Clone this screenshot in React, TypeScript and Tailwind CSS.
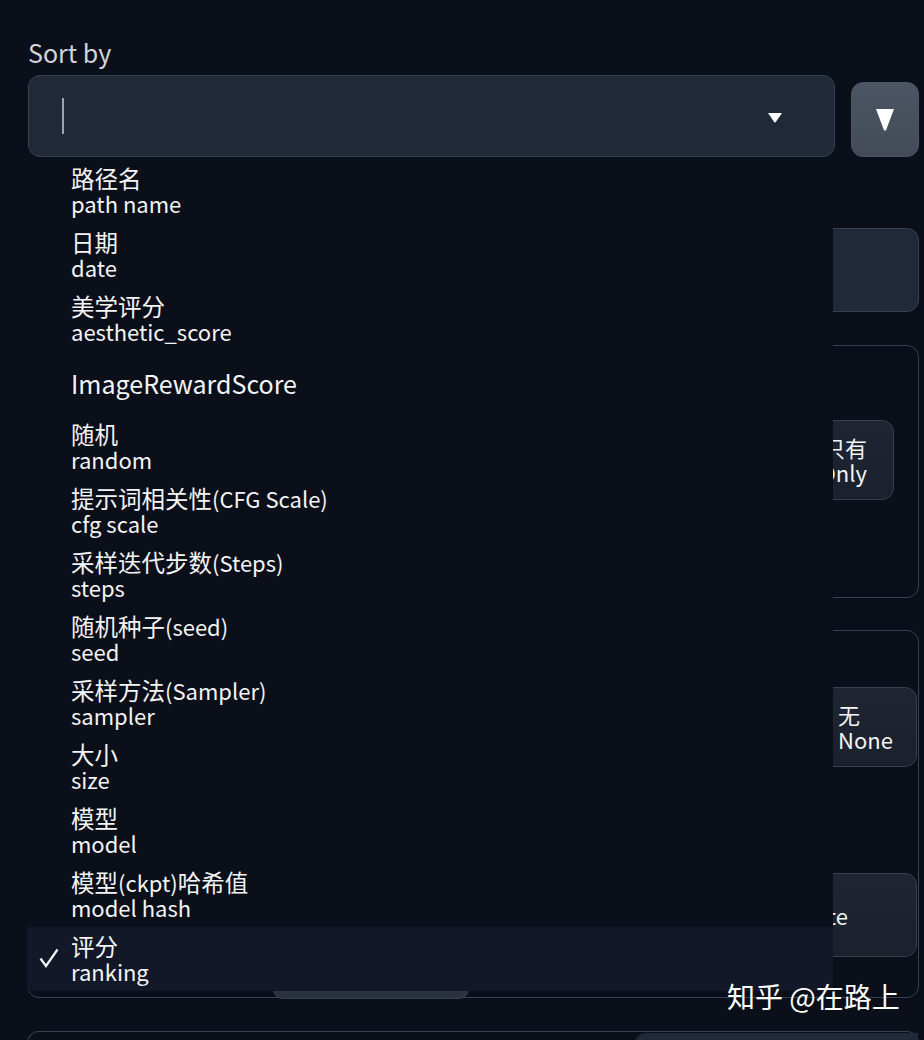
const OPTIONS: { zh?: string; en: string }[] = [
  { zh: '路径名', en: 'path name' },
  { zh: '日期', en: 'date' },
  { zh: '美学评分', en: 'aesthetic_score' },
  { en: 'ImageRewardScore' },
  { zh: '随机', en: 'random' },
  { zh: '提示词相关性(CFG Scale)', en: 'cfg scale' },
  { zh: '采样迭代步数(Steps)', en: 'steps' },
  { zh: '随机种子(seed)', en: 'seed' },
  { zh: '采样方法(Sampler)', en: 'sampler' },
  { zh: '大小', en: 'size' },
  { zh: '模型', en: 'model' },
  { zh: '模型(ckpt)哈希值', en: 'model hash' },
  { zh: '评分', en: 'ranking' },
];

const SELECTED = 'ranking';

// han glyphs come out a bit wider than the latin ones in the original
function Mixed({ text }: { text: string }) {
  return (
    <>
      {text.split(/([\u4e00-\u9fff]+)/).map((part, i) =>
        /[\u4e00-\u9fff]/.test(part) ? (
          <span key={i} className="text-[23.5px]">{part}</span>
        ) : (
          part
        )
      )}
    </>
  );
}

function SortDropdown() {
  return (
    <div className="absolute left-0 top-[123px] z-20 w-[806px] bg-[#0b0f19]">
      {OPTIONS.map((opt) => {
        const active = opt.en === SELECTED;
        return (
          <div
            key={opt.en}
            className={`relative flex h-16 flex-col justify-center pl-[44px] text-[#f3f4f6] ${active ? 'bg-[#121827]' : ''}`}
          >
            {active && (
              <svg viewBox="0 0 20 20" className="absolute left-[12px] top-[21px] h-5 w-5" fill="none" stroke="currentColor" strokeWidth="2.2">
                <path d="M1.5 10.5 L7 18 L18.5 1.5" />
              </svg>
            )}
            {opt.zh ? (
              <>
                <span className="text-[22px] leading-[25px]">
                  <Mixed text={opt.zh} />
                </span>
                <span className="text-[22px] leading-[25px]">{opt.en}</span>
              </>
            ) : (
              <span className="text-[25px] leading-[30px]">{opt.en}</span>
            )}
          </div>
        );
      })}
    </div>
  );
}

function GhostButton({ children, className }: { children: React.ReactNode; className: string }) {
  return (
    <div className={`flex flex-col justify-center rounded-xl border border-[#374151] bg-gradient-to-b from-[#1f2633] to-[#1a202c] text-[22px] leading-[25px] text-[#f3f4f6] ${className}`}>
      {children}
    </div>
  );
}

export default function App() {
  return (
    <div
      className="relative min-h-[1040px] overflow-hidden bg-[#0b0f19] pl-[27px] pr-[5px] pt-[36px]"
      style={{ fontFamily: '"Noto Sans CJK SC", "Noto Sans", sans-serif' }}
    >
      <div className="relative">
        <div className="pl-[1px] text-[25px] leading-[32px] text-[#d1d5db]">Sort by</div>
        <div className="mt-[7px] flex items-end gap-4 pl-[1px]">
          <div className="flex h-[82px] flex-1 items-center rounded-xl border border-[#374151] bg-[#1f2937] pl-[33px] pr-[52px]">
            <div className="h-[36px] w-[2px] bg-[#9ca3af]" />
            <div className="flex-1" />
            <svg viewBox="0 0 14 10" className="mt-[3px] h-[10px] w-[14px] text-white" fill="currentColor">
              <path d="M0 0 L14 0 L7.6 9.2 Q7 10 6.4 9.2 Z" />
            </svg>
          </div>
          <div className="flex h-[75px] w-[68px] items-center justify-center rounded-xl border border-[#4b5563] bg-gradient-to-b from-[#4b5563] to-[#434b58]">
            <svg viewBox="0 0 18 22" className="h-[22px] w-[18px] text-white" fill="currentColor">
              <path d="M0 0 L18 0 L10.2 20.8 Q9 22.6 7.8 20.8 Z" />
            </svg>
          </div>
        </div>
        <SortDropdown />
      </div>

      <div className="mt-[71px] h-[84px] rounded-xl border border-[#374151] bg-[#1f2937]" />

      <div className="mt-[33px] flex h-[253px] items-center justify-end rounded-xl border border-[#374151] pr-[24px]">
        <GhostButton className="-mt-[24px] h-[80px] w-[220px] items-end pr-[26px]">
          <span>只有</span>
          <span>Only</span>
        </GhostButton>
      </div>

      <div className="relative mt-[32px] flex h-[368px] flex-col items-end rounded-xl border border-[#374151] pr-[1px] pt-[56px]">
        <GhostButton className="h-[80px] w-[300px] pl-[220px]">
          <span>无</span>
          <span>None</span>
        </GhostButton>
        <GhostButton className="mt-[106px] h-[84px] w-[300px] items-end pr-[68px]">
          <span>Update</span>
        </GhostButton>
        <div className="absolute -bottom-[2px] left-[245px] h-[12px] w-[196px] rounded-b-[10px] border border-[#374151] bg-[#2a3240]" />
      </div>

      <div className="mt-[33px] flex h-[60px] justify-end rounded-t-xl border border-b-0 border-[#374151]">
        <div className="mt-[1px] h-full w-[284px] rounded-tl-xl bg-[#1f2937]" />
      </div>

      <div className="absolute left-[727px] top-[978px] z-30 text-[28px] leading-[36px] text-white">
        知乎 @在路上
      </div>
    </div>
  );
}
